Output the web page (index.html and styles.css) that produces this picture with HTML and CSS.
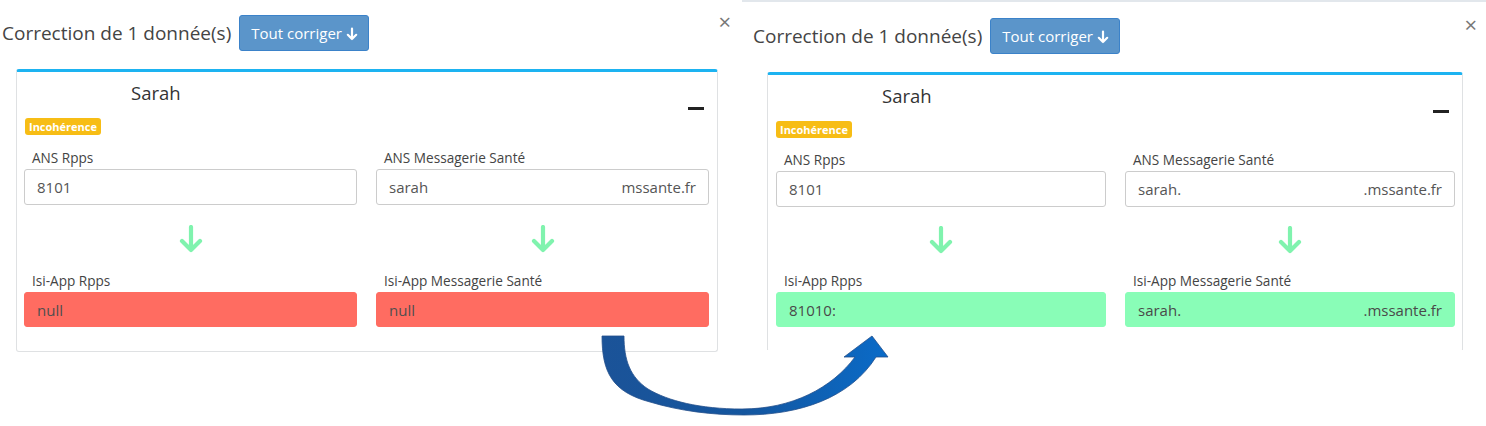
FILE: index.html
```html
<!DOCTYPE html>
<html lang="fr">
<head>
<meta charset="utf-8">
<title>Correction</title>
<link rel="stylesheet" href="styles.css">
</head>
<body>
<div class="stage">
  <section class="shot shot-before">
    <header class="shot-head">
      <h1 class="title">Correction de 1 donnée(s)</h1>
      <button class="btn-fix" type="button">Tout corriger
        <svg class="btn-arrow" viewBox="0 0 12 14" width="12" height="14"><path d="M6 1.5V12M1.8 7.8L6 12l4.2-4.2" fill="none" stroke="#fff" stroke-width="2.2" stroke-linecap="round" stroke-linejoin="round"/></svg>
      </button>
      <span class="close">×</span>
    </header>
    <div class="card">
      <div class="card-head">
        <div class="who">
          <div class="name">Sarah</div>
          <span class="badge">Incohérence</span>
        </div>
        <span class="collapse"></span>
      </div>
      <div class="fields">
        <div class="field">
          <div class="label">ANS Rpps</div>
          <div class="input"><span>8101</span></div>
        </div>
        <div class="field">
          <div class="label">ANS Messagerie Santé</div>
          <div class="input"><span>sarah</span><span>mssante.fr</span></div>
        </div>
        <div class="down"><svg viewBox="0 0 24 28" width="24" height="28"><path d="M12 2v23M3 16l9 9 9-9" fill="none" stroke="#80f3ae" stroke-width="4.2" stroke-linecap="round" stroke-linejoin="round"/></svg></div>
        <div class="down"><svg viewBox="0 0 24 28" width="24" height="28"><path d="M12 2v23M3 16l9 9 9-9" fill="none" stroke="#80f3ae" stroke-width="4.2" stroke-linecap="round" stroke-linejoin="round"/></svg></div>
        <div class="field">
          <div class="label">Isi-App Rpps</div>
          <div class="input input-bad"><span>null</span></div>
        </div>
        <div class="field">
          <div class="label">Isi-App Messagerie Santé</div>
          <div class="input input-bad"><span>null</span></div>
        </div>
      </div>
    </div>
  </section>

  <section class="shot shot-after">
    <header class="shot-head">
      <h1 class="title">Correction de 1 donnée(s)</h1>
      <button class="btn-fix" type="button">Tout corriger
        <svg class="btn-arrow" viewBox="0 0 12 14" width="12" height="14"><path d="M6 1.5V12M1.8 7.8L6 12l4.2-4.2" fill="none" stroke="#fff" stroke-width="2.2" stroke-linecap="round" stroke-linejoin="round"/></svg>
      </button>
      <span class="close">×</span>
    </header>
    <div class="card">
      <div class="card-head">
        <div class="who">
          <div class="name">Sarah</div>
          <span class="badge">Incohérence</span>
        </div>
        <span class="collapse"></span>
      </div>
      <div class="fields">
        <div class="field">
          <div class="label">ANS Rpps</div>
          <div class="input"><span>8101</span></div>
        </div>
        <div class="field">
          <div class="label">ANS Messagerie Santé</div>
          <div class="input"><span>sarah.</span><span>.mssante.fr</span></div>
        </div>
        <div class="down"><svg viewBox="0 0 24 28" width="24" height="28"><path d="M12 2v23M3 16l9 9 9-9" fill="none" stroke="#80f3ae" stroke-width="4.2" stroke-linecap="round" stroke-linejoin="round"/></svg></div>
        <div class="down"><svg viewBox="0 0 24 28" width="24" height="28"><path d="M12 2v23M3 16l9 9 9-9" fill="none" stroke="#80f3ae" stroke-width="4.2" stroke-linecap="round" stroke-linejoin="round"/></svg></div>
        <div class="field">
          <div class="label">Isi-App Rpps</div>
          <div class="input input-ok"><span>81010<span class="cut">:</span></span></div>
        </div>
        <div class="field">
          <div class="label">Isi-App Messagerie Santé</div>
          <div class="input input-ok"><span>sarah.</span><span>.mssante.fr</span></div>
        </div>
      </div>
    </div>
  </section>

  <svg class="swoosh" viewBox="0 0 1486 426" width="1486" height="426">
    <defs>
      <linearGradient id="sw" x1="0" y1="0" x2="1" y2="0">
        <stop offset="0" stop-color="#1b5398"/>
        <stop offset="0.5" stop-color="#14569f"/>
        <stop offset="1" stop-color="#0a6bc8"/>
      </linearGradient>
    </defs>
    <path d="M602 336 C602 372 612 392 650 402 C680 411 712 415 744 415 C800 415 850 398 876 357 L888 357 L872 336 L844 357 L855 357 C832 388 792 409 742 409 C700 409 668 401 648 389 C630 377 624 360 624 336 Z" fill="url(#sw)" stroke="#234f8c" stroke-width="0.8"/>
  </svg>
</div>
</body>
</html>
```

FILE: styles.css
```css
* { box-sizing: border-box; }

html, body {
  margin: 0;
  padding: 0;
  background: #fff;
}

body {
  font-family: "Open Sans", "Noto Sans", "Liberation Sans", sans-serif;
  color: #444;
}

.stage {
  position: relative;
  width: 1486px;
  height: 426px;
  display: flex;
  gap: 2px;
  overflow: hidden;
}

.shot {
  display: flex;
  flex-direction: column;
}

.shot-before {
  width: 740px;
}

.shot-after {
  width: 744px;
  height: 350px;
  overflow: hidden;
  border-top: 2px solid #e2e7ec;
}

/* header */
.shot-head {
  display: flex;
  align-items: center;
  height: 51px;
  padding-top: 15px;
  padding-left: 2px;
  padding-right: 9px;
}

.shot-after .shot-head {
  height: 52px;
  padding-top: 16px;
  padding-left: 11px;
  padding-right: 9px;
}

.title {
  margin: 0;
  font-size: 19px;
  font-weight: 400;
  color: #444;
  line-height: 24px;
}

.btn-fix {
  margin-left: 8px;
  height: 36px;
  padding: 0 10px 0 11px;
  display: flex;
  align-items: center;
  gap: 4px;
  background: #5b95ca;
  border: 1px solid #3b82c9;
  border-radius: 3px;
  color: #fff;
  font-family: "Open Sans", "Noto Sans", sans-serif;
  font-size: 15px;
  line-height: 20px;
}

.btn-arrow {
  display: block;
  margin-top: 1px;
}

.close {
  margin-left: auto;
  align-self: flex-start;
  margin-top: -6px;
  font-size: 22px;
  line-height: 24px;
  color: #777;
}

/* card */
.card {
  flex: none;
  margin: 18px 22px 0 16px;
  border: 1px solid #dfe1e3;
  border-top: 3px solid #1db3f1;
  border-radius: 3px;
}

.shot-after .card {
  margin: 18px 23px 0 25px;
}

.card-head {
  display: flex;
  align-items: flex-start;
  justify-content: space-between;
  padding: 8px 13px 0 8px;
}

.who {
  display: flex;
  flex-direction: column;
  align-items: flex-start;
}

.name {
  padding-left: 106px;
  font-size: 18.5px;
  line-height: 26px;
  color: #333;
}

.badge {
  display: block;
  margin-top: 12px;
  height: 17px;
  padding: 0 4px;
  background: #f7bd15;
  border-radius: 3px;
  color: #fff;
  font-size: 11px;
  font-weight: 700;
  line-height: 17px;
}

.collapse {
  display: block;
  width: 16px;
  height: 2.5px;
  margin-top: 27px;
  background: #222;
}

/* fields */
.fields {
  display: grid;
  grid-template-columns: 333px 333px;
  column-gap: 19px;
  padding: 14px 8px 24px 7px;
}

.shot-after .fields {
  grid-template-columns: 330px 330px;
  padding: 13px 7px 24px 8px;
}

.label {
  padding-left: 8px;
  margin-bottom: 2px;
  font-size: 13.6px;
  line-height: 18px;
  color: #444;
}

.input {
  height: 36px;
  display: flex;
  align-items: center;
  justify-content: space-between;
  padding: 0 12px;
  border: 1px solid #ccc;
  border-radius: 3px;
  font-size: 15px;
  color: #555;
  background: #fff;
}

.input-bad {
  height: 35px;
  background: #ff6c61;
  border-color: #ff6c61;
  color: #4f4f4f;
}

.input-ok {
  height: 35px;
  background: #89fdb7;
  border-color: #89fdb7;
  color: #4a4a4a;
}

.cut {
  display: inline-block;
  width: 3px;
  overflow: hidden;
  vertical-align: bottom;
}

.down {
  height: 67px;
  display: flex;
  align-items: center;
  justify-content: center;
}

.shot-after .down {
  height: 65px;
}

.down svg {
  display: block;
}

.swoosh {
  position: absolute;
  left: 0;
  top: 0;
  pointer-events: none;
}
```
